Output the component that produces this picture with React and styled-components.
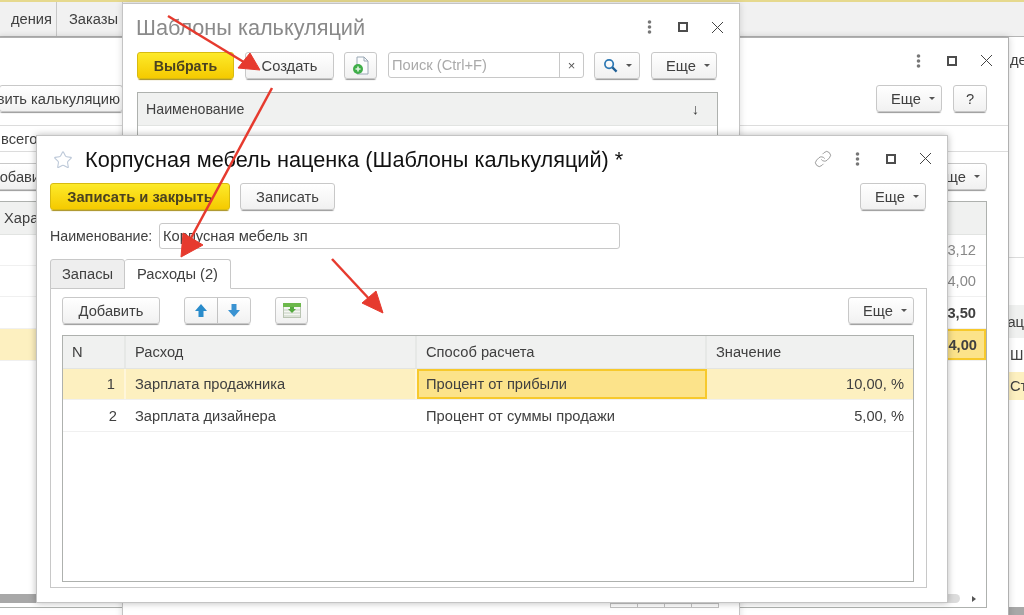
import React from "react";
import styled, { createGlobalStyle } from "styled-components";
import { Link, Star } from "lucide-react";

const GlobalStyle = createGlobalStyle`
  html, body {
    margin: 0;
    padding: 0;
    background: #fff;
  }
  * {
    box-sizing: border-box;
  }
`;

const Canvas = styled.div`
  position: relative;
  width: 1024px;
  height: 615px;
  overflow: hidden;
  background: #fff;
  font-family: "Liberation Sans", Arial, sans-serif;
  font-size: 14.7px;
  color: #404040;
  filter: blur(0.45px);
`;

const TopStrip = styled.div`
  height: 2px;
  background: #e6d98e;
`;

const TabBar = styled.div`
  display: flex;
  height: 35px;
  background: #f1f1f1;
  border-bottom: 1px solid #b5b5b5;
`;

const SectionTab = styled.div`
  display: flex;
  align-items: center;
  justify-content: flex-end;
  width: ${(p) => p.$w}px;
  padding-right: 4px;
  border-right: 1px solid #c8c8c8;
`;

const Win = styled.div`
  position: absolute;
  left: ${(p) => p.$x}px;
  top: ${(p) => p.$y}px;
  width: ${(p) => p.$w}px;
  height: ${(p) => p.$h}px;
  display: flex;
  flex-direction: column;
  background: #fff;
  border: 1px solid ${(p) => p.$line || "#c4c4c4"};
  box-shadow: 0 0 7px rgba(0, 0, 0, ${(p) => p.$shade || 0.18});
`;

const TitleRow = styled.div`
  display: flex;
  align-items: center;
  flex: none;
  height: ${(p) => p.$h}px;
  padding: 0 5px 0 ${(p) => p.$left}px;
`;

const Title = styled.div`
  flex: 1;
  font-size: 21.7px;
  color: ${(p) => p.$color};
  white-space: nowrap;
`;

const StarSlot = styled.span`
  display: flex;
  flex: none;
  width: 35px;
  padding-left: 3px;
  color: #bcc8d8;
`;

const Slot = styled.span`
  display: flex;
  align-items: center;
  justify-content: center;
  width: 34px;
  height: 20px;
  margin-bottom: 2px;
  color: #777;
`;

const SquareIcon = styled.span`
  display: block;
  width: 10px;
  height: 10px;
  border: 2px solid #4d4d4d;
`;

const Dots = () => (
  <svg width="5" height="14" viewBox="0 0 5 14">
    <circle cx="2.500" cy="2" r="1.800" fill="#777" />
    <circle cx="2.500" cy="7" r="1.800" fill="#777" />
    <circle cx="2.500" cy="12" r="1.800" fill="#777" />
  </svg>
);

const CloseIcon = () => (
  <svg width="13" height="13" viewBox="0 0 13 13">
    <path d="M1 1l11 11M12 1L1 12" stroke="#444" strokeWidth="1" fill="none" />
  </svg>
);

const Controls = ({ link }) => (
  <>
    {link && (
      <Slot>
        <Link size={18} strokeWidth={1.1} color="#888" />
      </Slot>
    )}
    <Slot>
      <Dots />
    </Slot>
    <Slot>
      <SquareIcon />
    </Slot>
    <Slot>
      <CloseIcon />
    </Slot>
  </>
);

const Toolbar = styled.div`
  display: flex;
  align-items: flex-start;
  flex: none;
  height: ${(p) => p.$h}px;
  padding: ${(p) => p.$top || 0}px ${(p) => p.$right}px 0 ${(p) => p.$left}px;
`;

const Spacer = styled.div`
  flex: 1;
`;

const Btn = styled.div`
  display: flex;
  align-items: center;
  justify-content: center;
  flex: none;
  width: ${(p) => p.$w}px;
  height: 27px;
  margin-left: ${(p) => p.$gap || 0}px;
  border: 1px solid #c8c8c8;
  border-radius: 3px;
  background: linear-gradient(#fff, #f1f1f1);
  box-shadow: 0 2px 1px -1px #999;
  color: #404040;
  white-space: nowrap;
`;

const YellowBtn = styled(Btn)`
  border-color: #d8bb10;
  background: linear-gradient(#fdea2a, #f5ca00);
  box-shadow: 0 2px 1px -1px #a8901c;
  font-weight: 700;
  font-size: ${(p) => p.$size || 14.7}px;
  color: #4a4220;
`;

const CutBtn = styled(Btn)`
  justify-content: flex-end;
  padding-right: 2px;
`;

const Caret = styled.span`
  width: 0;
  height: 0;
  margin-left: ${(p) => p.$gap || 8}px;
  border-left: 3px solid transparent;
  border-right: 3px solid transparent;
  border-top: 3px solid #555;
`;

const MoreLabel = styled.span`
  margin-left: 8px;
`;

const MoreBtn = ({ gap }) => (
  <Btn $w={66} $gap={gap}>
    <MoreLabel>Еще</MoreLabel>
    <Caret />
  </Btn>
);

const Group = styled.div`
  display: flex;
  flex: none;
  width: 67px;
  height: 27px;
  margin-left: ${(p) => p.$gap}px;
  border: 1px solid #c8c8c8;
  border-radius: 3px;
  background: linear-gradient(#fff, #f1f1f1);
  box-shadow: 0 2px 1px -1px #999;
`;

const GroupPart = styled.div`
  flex: 1;
  display: flex;
  align-items: center;
  justify-content: center;
  & + & {
    border-left: 1px solid #c2c2c2;
  }
`;

const SearchBox = styled.div`
  display: flex;
  flex: none;
  width: 196px;
  height: 26px;
  margin-left: 11px;
  border: 1px solid #c8c8c8;
  border-radius: 3px;
  color: #aaa;
`;

const SearchText = styled.div`
  flex: 1;
  padding: 4px 3px;
`;

const SearchClear = styled.div`
  width: 24px;
  display: flex;
  align-items: center;
  justify-content: center;
  border-left: 1px solid #c8c8c8;
  color: #555;
  font-size: 13px;
`;

const Table = styled.div`
  display: flex;
  flex-direction: column;
  flex: none;
  height: ${(p) => p.$h}px;
  margin: ${(p) => p.$margin};
  border: 1px solid #aeb1ae;
  overflow: hidden;
`;

const Row = styled.div`
  display: grid;
  grid-template-columns: ${(p) => p.$cols};
  flex: none;
  height: ${(p) => p.$h || 31}px;
  border-bottom: 1px solid ${(p) => (p.$head ? "#e2e4e2" : "#f0f0f0")};
  background: ${(p) => (p.$head ? "#f0f1f0" : p.$active ? "#fdf0c0" : "#fff")};
`;

const Cell = styled.div`
  display: flex;
  align-items: center;
  justify-content: ${(p) => (p.$right ? "flex-end" : "flex-start")};
  padding: ${(p) => (p.$pad ? p.$pad : "0 9px")};
  white-space: nowrap;
  font-weight: ${(p) => (p.$bold ? 700 : 400)};
  font-size: ${(p) => p.$size || 14.7}px;
  color: ${(p) => p.$color || "#404040"};
  ${(p) => p.$sep && `border-right: 2px solid ${p.$active ? "#fff6da" : "#e6e8e6"};`}
`;

const ActiveCell = styled(Cell)`
  background: #fce38a;
  border: 2px solid #f7c92c;
  padding: 0 7px;
`;

const TableFill = styled.div`
  flex: 1;
`;

const ScrollRow = styled.div`
  display: flex;
  align-items: flex-start;
  flex: none;
  height: 13px;
  padding-right: 10px;
`;

const ScrollThumb = styled.div`
  flex: 1;
  height: 9px;
  margin-right: 12px;
  background: linear-gradient(90deg, #a8a8a8 0, #a8a8a8 92%, #dcdcdc 92%);
  border-radius: 0 5px 5px 0;
`;

const ScrollArrow = styled.span`
  width: 0;
  height: 0;
  margin-top: 2px;
  border-top: 3px solid transparent;
  border-bottom: 3px solid transparent;
  border-left: 4px solid #555;
`;

const Rule = styled.div`
  flex: none;
  height: 1px;
  background: #dcdcdc;
`;

const TextLine = styled.div`
  display: flex;
  align-items: center;
  flex: none;
  height: 25px;
  padding-left: 2px;
`;

const Pager = styled.div`
  display: flex;
  flex: none;
  height: 5px;
  margin: 0 20px 0 487px;
  border: 1px solid #c2c2c2;
`;

const PagerCell = styled.div`
  flex: 1;
  & + & {
    border-left: 1px solid #c2c2c2;
  }
`;

const FieldRow = styled.div`
  display: flex;
  align-items: center;
  flex: none;
  height: 26px;
  margin: 0 0 10px 13px;
`;

const FieldLabel = styled.div`
  flex: none;
  width: 109px;
  font-size: 14.2px;
`;

const FieldInput = styled.div`
  display: flex;
  align-items: center;
  width: 461px;
  height: 26px;
  padding-left: 3px;
  border: 1px solid #c8c8c8;
  border-radius: 3px;
`;

const Tabs = styled.div`
  display: flex;
  flex: none;
  height: 30px;
  margin-left: 13px;
  position: relative;
  z-index: 1;
`;

const FormTab = styled.div`
  display: flex;
  align-items: center;
  justify-content: center;
  width: ${(p) => p.$w}px;
  border: 1px solid #c8c8c8;
  border-bottom-color: ${(p) => (p.$on ? "#fff" : "#c8c8c8")};
  border-left-width: ${(p) => (p.$on ? 0 : 1)}px;
  border-radius: 3px 3px 0 0;
  background: ${(p) => (p.$on ? "#fff" : "#eeeeee")};
`;

const TabPanel = styled.div`
  display: flex;
  flex-direction: column;
  flex: none;
  height: 300px;
  margin: -1px 20px 0 13px;
  padding-top: 8px;
  border: 1px solid #c8c8c8;
`;

const RightEdge = styled.div`
  position: absolute;
  left: 1008px;
  top: 37px;
  width: 16px;
  height: 578px;
  display: flex;
  flex-direction: column;
  overflow: hidden;
  background: #fff;
  white-space: nowrap;
`;

const EdgeLine = styled.div`
  flex: none;
  height: ${(p) => p.$h}px;
  margin-top: ${(p) => p.$top || 0}px;
  display: flex;
  align-items: center;
  justify-content: ${(p) => (p.$end ? "flex-end" : "flex-start")};
  padding-left: ${(p) => (p.$end ? 0 : 2)}px;
  background: ${(p) => p.$bg || "transparent"};
  border-bottom: ${(p) => (p.$line ? "1px solid #dcdcdc" : "none")};
`;

const Arrows = styled.svg`
  position: absolute;
  left: 0;
  top: 0;
  width: 1024px;
  height: 615px;
  pointer-events: none;
`;

const DocPlus = () => (
  <svg width="18" height="19" viewBox="0 0 18 19">
    <path d="M5 1h7l4 4v13H5z" fill="#fbfcfd" stroke="#9aa8b5" />
    <path d="M12 1v4h4" fill="none" stroke="#9aa8b5" />
    <circle cx="6" cy="13" r="5" fill="#3fae49" />
    <path d="M3.500 13h5M6 10.500v5" stroke="#dff5df" strokeWidth="1.600" />
  </svg>
);

const Magnifier = () => (
  <svg width="15" height="15" viewBox="0 0 16 16">
    <circle cx="6.500" cy="6.500" r="4.500" fill="none" stroke="#2b77b3" strokeWidth="1.800" />
    <path d="M10 10l4.500 4.500" stroke="#1f5f95" strokeWidth="2.400" />
  </svg>
);

const UpArrow = () => (
  <svg width="14" height="15" viewBox="0 0 14 15">
    <path d="M7 1l6 7H9.500v6h-5V8H1z" fill="#2a8ccb" />
  </svg>
);

const DownArrow = () => (
  <svg width="14" height="15" viewBox="0 0 14 15">
    <path d="M4.500 1h5v6H13l-6 7-6-7h3.500z" fill="#3a93d2" />
  </svg>
);

const TableIcon = () => (
  <svg width="18" height="15" viewBox="0 0 18 15">
    <rect x="0.500" y="0.500" width="17" height="14" fill="#f4f6f2" stroke="#b9c4b2" />
    <rect x="0" y="0" width="18" height="4" fill="#6cb84b" />
    <path d="M1 7h16M1 10h16M1 13h16" stroke="#c5cfc0" />
    <path d="M7 4h4v2h2l-4 4-4-4h2z" fill="#54aa3e" />
  </svg>
);

const backCols = "800px 1fr";
const formCols = "63px 291px 290px 1fr";

const App = () => (
  <Canvas>
    <GlobalStyle />
    <TopStrip />
    <TabBar>
      <SectionTab $w={57}>дения</SectionTab>
      <SectionTab $w={66}>Заказы</SectionTab>
    </TabBar>

    <RightEdge>
      <EdgeLine $h={46}>ден</EdgeLine>
      <EdgeLine $h={175} $line />
      <EdgeLine $h={33} $top={47} $bg="#f0f1f0" $end>кац</EdgeLine>
      <EdgeLine $h={34}>Ш</EdgeLine>
      <EdgeLine $h={28} $bg="#fdf0c0">Ст</EdgeLine>
      <EdgeLine $h={207} />
      <EdgeLine $h={8} $bg="#a8a8a8" />
    </RightEdge>

    <Win $x={-2} $y={37} $w={1011} $h={600} $line="#b0b0b0">
      <TitleRow $h={47} $left={0}>
        <Spacer />
        <Controls />
      </TitleRow>
      <Toolbar $h={40} $left={0} $right={21}>
        <CutBtn $w={124}>вить калькуляцию</CutBtn>
        <Spacer />
        <MoreBtn />
        <Btn $w={34} $gap={11}>?</Btn>
      </Toolbar>
      <Rule />
      <TextLine>всего</TextLine>
      <Rule />
      <Toolbar $h={49} $left={0} $right={21} $top={11}>
        <Btn $w={60} $gap={-7}>Добавить</Btn>
        <Spacer />
        <MoreBtn />
      </Toolbar>
      <Table $h={407} $margin="0 21px 0 -4px">
        <Row $cols={backCols} $h={33} $head>
          <Cell $pad="0 0 0 8px">Характеристика</Cell>
          <Cell />
        </Row>
        <Row $cols={backCols}>
          <Cell />
          <Cell $right $color="#888" $pad="0 10px">3,12</Cell>
        </Row>
        <Row $cols={backCols}>
          <Cell />
          <Cell $right $color="#888" $pad="0 10px">4,00</Cell>
        </Row>
        <Row $cols={backCols} $h={32}>
          <Cell />
          <Cell $right $bold $pad="0 10px">3,50</Cell>
        </Row>
        <Row $cols={backCols} $active $h={32}>
          <Cell />
          <ActiveCell $right $bold>4,00</ActiveCell>
        </Row>
        <TableFill />
        <ScrollRow>
          <ScrollThumb />
          <ScrollArrow />
        </ScrollRow>
      </Table>
    </Win>

    <Win $x={122} $y={3} $w={618} $h={620} $shade={0.14}>
      <TitleRow $h={48} $left={13}>
        <Title $color="#8a8a8a">Шаблоны калькуляций</Title>
        <Controls />
      </TitleRow>
      <Toolbar $h={40} $left={14} $right={22}>
        <YellowBtn $w={97} $size={14.2}>Выбрать</YellowBtn>
        <Btn $w={89} $gap={11}>Создать</Btn>
        <Btn $w={33} $gap={10}>
          <DocPlus />
        </Btn>
        <SearchBox>
          <SearchText>Поиск (Ctrl+F)</SearchText>
          <SearchClear>×</SearchClear>
        </SearchBox>
        <Btn $w={46} $gap={10}>
          <Magnifier />
          <Caret $gap={8} />
        </Btn>
        <MoreBtn gap={11} />
      </Toolbar>
      <Table $h={511} $margin="0 21px 0 14px">
        <Row $cols="1fr 50px" $h={33} $head>
          <Cell $size={14.2} $pad="0 8px">Наименование</Cell>
          <Cell $right $pad="0 18px 0 0">↓</Cell>
        </Row>
      </Table>
      <Pager>
        <PagerCell />
        <PagerCell />
        <PagerCell />
        <PagerCell />
      </Pager>
    </Win>

    <Win $x={36} $y={135} $w={912} $h={468} $shade={0.28}>
      <TitleRow $h={47} $left={13}>
        <StarSlot>
          <Star size={20} strokeWidth={1.3} />
        </StarSlot>
        <Title $color="#111">Корпусная мебель наценка (Шаблоны калькуляций) *</Title>
        <Controls link />
      </TitleRow>
      <Toolbar $h={40} $left={13} $right={21}>
        <YellowBtn $w={180}>Записать и закрыть</YellowBtn>
        <Btn $w={95} $gap={10}>Записать</Btn>
        <Spacer />
        <MoreBtn />
      </Toolbar>
      <FieldRow>
        <FieldLabel>Наименование:</FieldLabel>
        <FieldInput>Корпусная мебель зп</FieldInput>
      </FieldRow>
      <Tabs>
        <FormTab $w={75}>Запасы</FormTab>
        <FormTab $w={106} $on>Расходы (2)</FormTab>
      </Tabs>
      <TabPanel>
        <Toolbar $h={38} $left={11} $right={12}>
          <Btn $w={98}>Добавить</Btn>
          <Group $gap={24}>
            <GroupPart>
              <UpArrow />
            </GroupPart>
            <GroupPart>
              <DownArrow />
            </GroupPart>
          </Group>
          <Btn $w={33} $gap={24}>
            <TableIcon />
          </Btn>
          <Spacer />
          <MoreBtn />
        </Toolbar>
        <Table $h={247} $margin="0 12px 0 11px">
          <Row $cols={formCols} $h={33} $head>
            <Cell $sep>N</Cell>
            <Cell $sep>Расход</Cell>
            <Cell $sep>Способ расчета</Cell>
            <Cell>Значение</Cell>
          </Row>
          <Row $cols={formCols} $active>
            <Cell $right $sep $active>1</Cell>
            <Cell $sep $active>Зарплата продажника</Cell>
            <ActiveCell>Процент от прибыли</ActiveCell>
            <Cell $right>10,00, %</Cell>
          </Row>
          <Row $cols={formCols} $h={32}>
            <Cell $right>2</Cell>
            <Cell>Зарплата дизайнера</Cell>
            <Cell>Процент от суммы продажи</Cell>
            <Cell $right>5,00, %</Cell>
          </Row>
        </Table>
      </TabPanel>
    </Win>

    <Arrows viewBox="0 0 1024 615">
      <g fill="#e63a2e" stroke="#e63a2e" strokeWidth="1">
        <path d="M168 16L247 64" strokeWidth="2.500" fill="none" />
        <path d="M260 70L238 68L250 53z" />
        <path d="M272 88L190 240" strokeWidth="2.500" fill="none" />
        <path d="M181 257L183 233L203 245z" />
        <path d="M332 259L372 302" strokeWidth="2.500" fill="none" />
        <path d="M383 313L362 303L376 291z" />
      </g>
    </Arrows>
  </Canvas>
);

export default App;
